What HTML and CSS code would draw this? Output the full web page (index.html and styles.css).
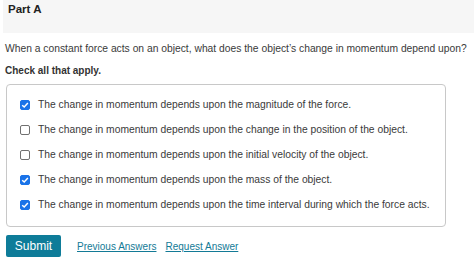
FILE: index.html
```
<!DOCTYPE html>
<html>
<head>
<meta charset="utf-8">
<link rel="stylesheet" href="styles.css">
</head>
<body>
<div class="page">
  <div class="part-header"><span class="part-title">Part A</span></div>
  <p class="question">When a constant force acts on an object, what does the object’s change in momentum depend upon?</p>
  <p class="instruction">Check all that apply.</p>
  <div class="options">
    <label class="option"><span class="box checked"><svg viewBox="0 0 10 10" width="8" height="8"><path d="M1.5 5.2 L4 7.6 L8.6 2.4" fill="none" stroke="#fff" stroke-width="1.8"/></svg></span><span class="text">The change in momentum depends upon the magnitude of the force.</span></label>
    <label class="option"><span class="box"></span><span class="text">The change in momentum depends upon the change in the position of the object.</span></label>
    <label class="option"><span class="box"></span><span class="text">The change in momentum depends upon the initial velocity of the object.</span></label>
    <label class="option"><span class="box checked"><svg viewBox="0 0 10 10" width="8" height="8"><path d="M1.5 5.2 L4 7.6 L8.6 2.4" fill="none" stroke="#fff" stroke-width="1.8"/></svg></span><span class="text">The change in momentum depends upon the mass of the object.</span></label>
    <label class="option"><span class="box checked"><svg viewBox="0 0 10 10" width="8" height="8"><path d="M1.5 5.2 L4 7.6 L8.6 2.4" fill="none" stroke="#fff" stroke-width="1.8"/></svg></span><span class="text">The change in momentum depends upon the time interval during which the force acts.</span></label>
  </div>
  <div class="actions">
    <button class="submit">Submit</button>
    <a class="link" href="#">Previous Answers</a>
    <a class="link" href="#">Request Answer</a>
  </div>
</div>
</body>
</html>
```
FILE: styles.css
```
html, body { margin: 0; padding: 0; background: #fff; }
body { font-family: "Liberation Sans", Arial, sans-serif; color: #333; font-size: 10.3px; }
.page { width: 474px; height: 265px; overflow: hidden; }
.part-header { margin-left: 3px; height: 33px; background: #f6f6f6; box-sizing: border-box; padding: 3px 0 0 5px; }
.part-title { font-weight: bold; font-size: 11.5px; color: #222; }
.question { margin: 9px 0 0 5px; font-size: 10.3px; color: #3a3a3a; line-height: 13px; white-space: nowrap; }
.instruction { margin: 9px 0 0 5px; font-weight: bold; font-size: 10px; color: #333; line-height: 13px; white-space: nowrap; }
.options { margin: 7px 0 0 6px; width: 440px; height: 143px; box-sizing: border-box; border: 1px solid #c8c8c8; border-radius: 4px; padding: 13px 0 0 13px; display: flex; flex-direction: column; gap: 12px; }
.option { display: flex; align-items: center; gap: 8px; height: 13px; color: #3a3a3a; white-space: nowrap; }
.box { width: 8px; height: 8px; border: 1px solid #707070; border-radius: 2px; background: #fff; display: flex; align-items: center; justify-content: center; }
.box.checked { background: #1a73e8; border-color: #1a73e8; }
.actions { margin: 8px 0 0 6px; display: flex; align-items: center; gap: 16px; }
.submit { width: 55px; height: 22px; background: #0e7c99; color: #fff; border: none; border-radius: 2px; font-family: "Liberation Sans", Arial, sans-serif; font-size: 12px; padding: 0; }
.link { color: #137a96; font-size: 10px; text-decoration: underline; }
.link + .link { margin-left: -7px; }
```
